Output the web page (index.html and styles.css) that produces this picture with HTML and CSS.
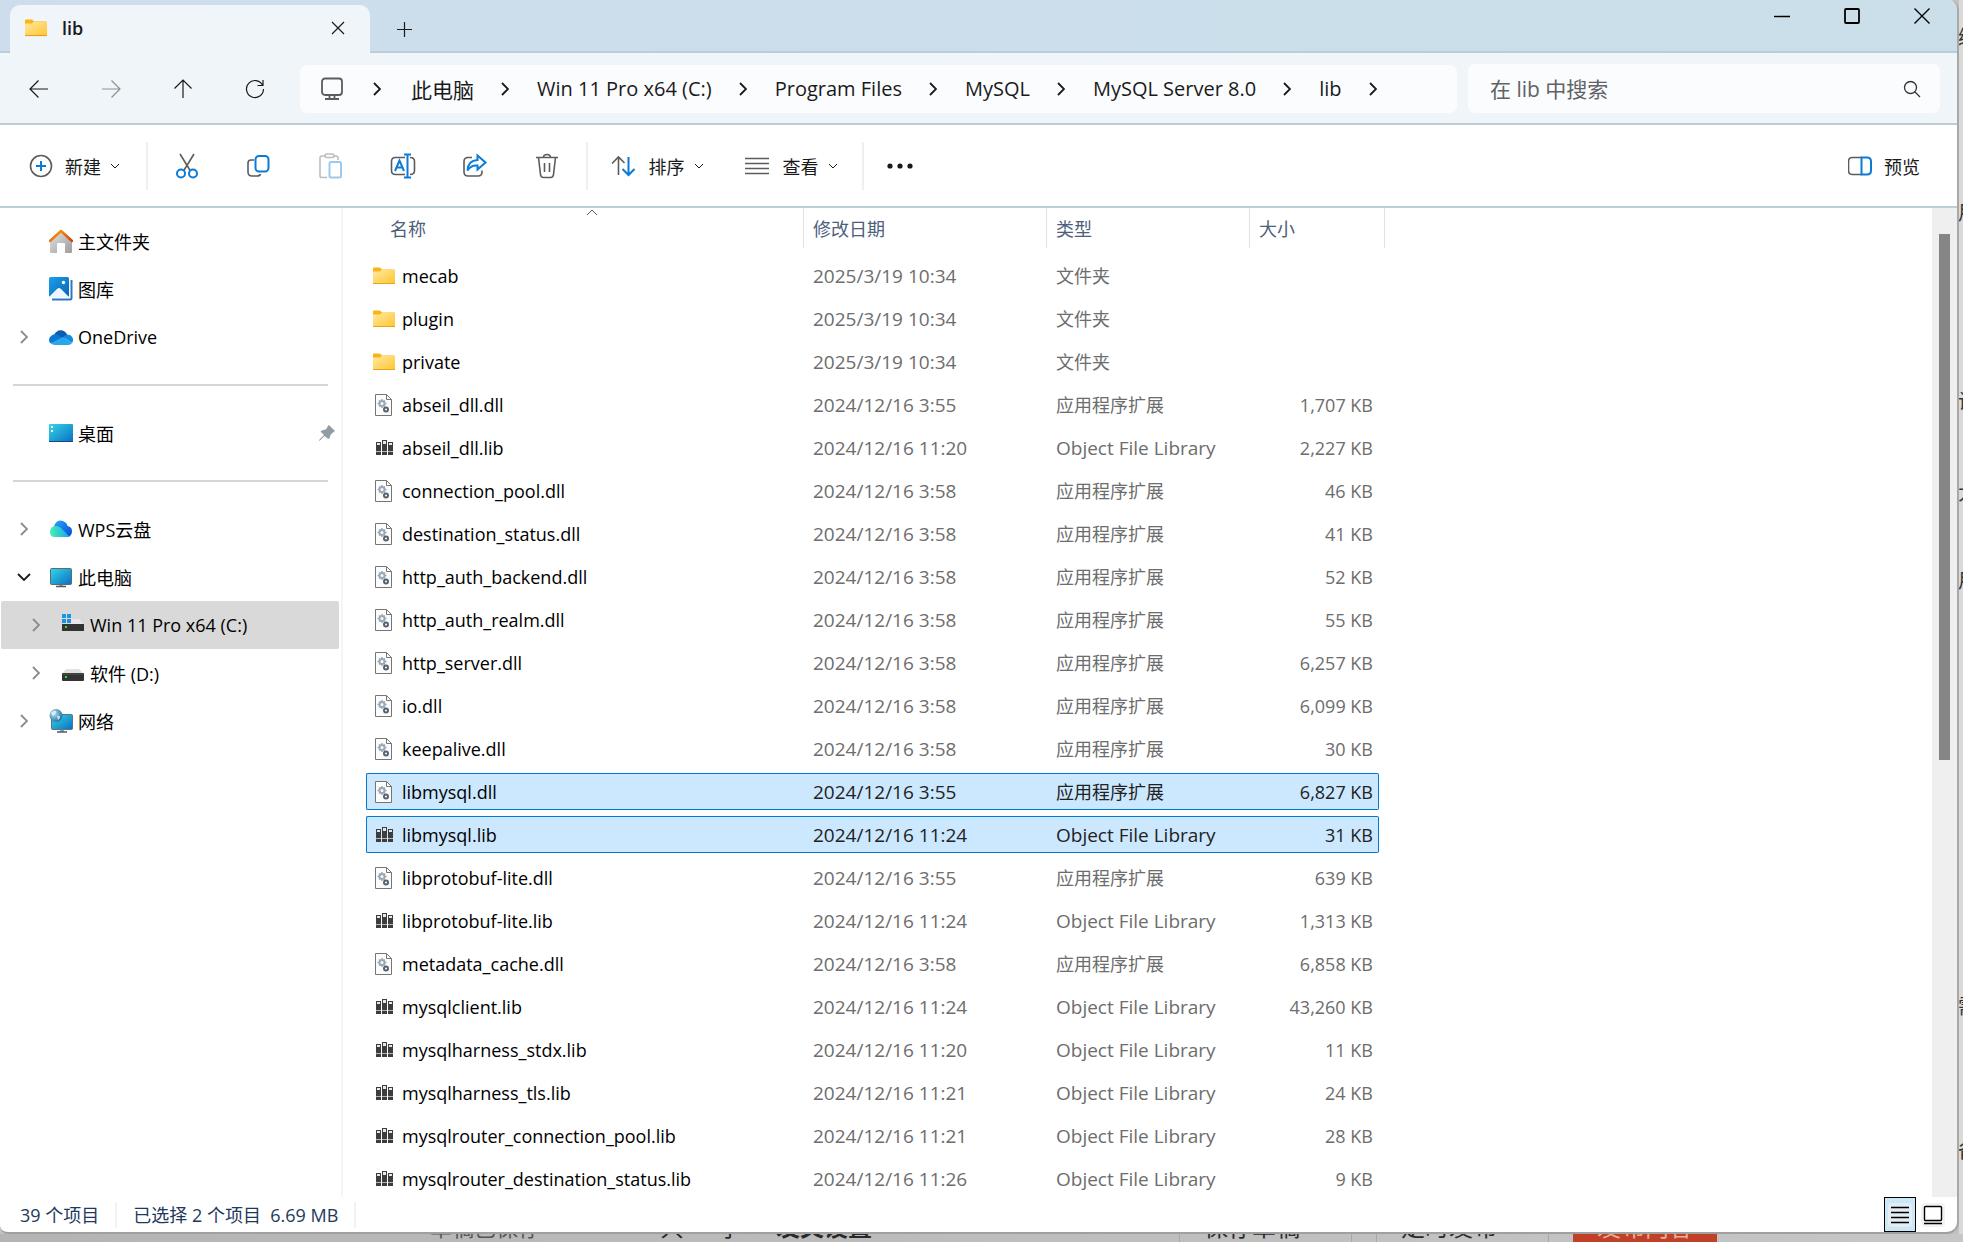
FILE: index.html
```
<!DOCTYPE html>
<html lang="zh-CN">
<head>
    <meta charset="UTF-8">
    <meta name="viewport" content="width=device-width, initial-scale=1.0">
    <title>lib</title>
    <link rel="stylesheet" href="styles.css">
</head>
<body>

    <!-- Shared icons -->
    <svg class="defs" aria-hidden="true">
        <defs>
            <linearGradient id="gFolder" x1="0" y1="0" x2="1" y2="1"><stop offset="0" stop-color="#ffe9a0"/><stop offset="1" stop-color="#ffc52e"/></linearGradient>
            <linearGradient id="gScreen" x1="0" y1="0" x2="1" y2="1"><stop offset="0" stop-color="#35d6e6"/><stop offset="1" stop-color="#0a6fc2"/></linearGradient>
            <linearGradient id="gRoof" x1="0" y1="0" x2="1" y2="0"><stop offset="0" stop-color="#e8741a"/><stop offset=".5" stop-color="#f58a0c"/><stop offset="1" stop-color="#d23c0e"/></linearGradient>
            <linearGradient id="gWall" x1="0" y1="0" x2="1" y2="1"><stop offset="0" stop-color="#e4e4e4"/><stop offset="1" stop-color="#9c9c9c"/></linearGradient>
            <linearGradient id="gPhoto" x1="0" y1="0" x2="1" y2="1"><stop offset="0" stop-color="#1ba2ea"/><stop offset="1" stop-color="#0a62b4"/></linearGradient>
            <linearGradient id="gWps" x1="0" y1="0" x2="1" y2="0"><stop offset="0" stop-color="#4af0b4"/><stop offset="1" stop-color="#12a5f0"/></linearGradient>
            <linearGradient id="gWps2" x1="0" y1="0" x2="1" y2="1"><stop offset="0" stop-color="#2aa8f8"/><stop offset="1" stop-color="#0446d8"/></linearGradient>
            <radialGradient id="gGlobe" cx=".35" cy=".35" r=".7"><stop offset="0" stop-color="#b9e2f2"/><stop offset="1" stop-color="#1f6f9f"/></radialGradient>
        </defs>
        <symbol id="folder" viewBox="0 0 24 24">
            <path d="M1 4.500q0-1 1-1h6l2 2h12q1 0 1 1V12H1z" fill="#fbb416"/>
            <path d="M1 7.500h7l1.500-1.500H23v14H1z" fill="url(#gFolder)"/>
            <path d="M1 19.500h22" stroke="#e8a21c"/>
        </symbol>
        <symbol id="dll" viewBox="0 0 24 24">
            <path d="M3.500 1.500h11l5 5v16h-16z" fill="#fcfcfc" stroke="#757575"/>
            <path d="M14.500 1.500v5h5" fill="none" stroke="#757575"/>
            <circle cx="10" cy="10.500" r="2.500" fill="none" stroke="#9aa8b6" stroke-width="2"/>
            <path d="M10 6v9M5.500 10.500h9M7 7.500l6 6M13 7.500l-6 6" stroke="#9aa8b6" stroke-dasharray="1.500 6" stroke-width="1.500"/>
            <circle cx="14" cy="16.500" r="2" fill="#fff" stroke="#556371" stroke-width="2"/>
        </symbol>
        <symbol id="archive" viewBox="0 0 24 24">
            <path d="M4 6h5v13H4zM10 4h5v15h-5zM16 6h5v13h-5z" fill="#3d3d3d"/>
            <path d="M5 7h3v2H5zM11 5h3v3h-3zM17 7h3v2h-3z" fill="#e8e8e8"/>
            <path d="M4 15.500h5M10 15.500h5M16 15.500h5" stroke="#b5b5b5"/>
        </symbol>
        <symbol id="chev" viewBox="0 0 8 14"><path d="M1 1l6 6-6 6" fill="none" stroke="currentColor" stroke-width="1.800"/></symbol>
        <symbol id="down" viewBox="0 0 10 6"><path d="M1 1l4 4 4-4" fill="none" stroke="currentColor"/></symbol>
        <symbol id="drive" viewBox="0 0 24 24">
            <path d="M5 8h13l5 5H1z" fill="#e1e1e4"/>
            <rect x="1" y="12" width="22" height="8" rx="1" fill="#333"/>
            <path d="M1 13h22" stroke="#555"/>
            <rect x="4" y="15" width="2" height="2" fill="#2ee62e"/>
        </symbol>
    </svg>

    <div class="window">
        <header class="titlebar">
            <div class="tab">
                <svg class="icon" width="24" height="24"><use href="#folder"/></svg>
                <span class="tab-title">lib</span>
                <button class="tab-close" aria-label="关闭标签页"><svg width="14" height="14" viewBox="0 0 14 14"><path d="M1 1l12 12M13 1L1 13"/></svg></button>
            </div>
            <button class="tab-new" aria-label="新标签页"><svg width="15" height="15" viewBox="0 0 15 15"><path d="M7.500 0v15M0 7.500h15"/></svg></button>
            <div class="window-buttons">
                <button aria-label="最小化"><svg width="16" height="16" viewBox="0 0 16 16"><path d="M0 8.500h16"/></svg></button>
                <button aria-label="最大化"><svg width="16" height="16" viewBox="0 0 16 16"><rect x="1" y="1" width="14" height="14" rx="1" stroke-width="1.800"/></svg></button>
                <button aria-label="关闭"><svg width="16" height="16" viewBox="0 0 16 16"><path d="M0.500 0.500l15 15M15.500 0.500l-15 15"/></svg></button>
            </div>
        </header>

        <nav class="navbar">
            <div class="nav-buttons">
                <button aria-label="后退"><svg width="20" height="20" viewBox="0 0 20 20"><path d="M19 10H1M9.500 1.500L1 10l8.500 8.500"/></svg></button>
                <button aria-label="前进" class="dim"><svg width="20" height="20" viewBox="0 0 20 20"><path d="M1 10h18M10.500 1.500L19 10l-8.500 8.500"/></svg></button>
                <button aria-label="向上"><svg width="20" height="20" viewBox="0 0 20 20"><path d="M10 19V1M1.500 9.500L10 1l8.500 8.500"/></svg></button>
                <button aria-label="刷新"><svg width="20" height="20" viewBox="0 0 20 20"><path d="M17.500 6A8.500 8.500 0 1 0 18.500 10M18 1v5.500h-5.500"/></svg></button>
            </div>
            <div class="address">
                <svg class="pc" width="24" height="24" viewBox="0 0 24 24"><rect x="2" y="1.500" width="20" height="16.500" rx="3"/><path d="M9.500 18v4M14.500 18v4M5 22h14"/></svg>
                <svg class="sep first" width="8" height="14"><use href="#chev"/></svg>
                <a href="#" class="zh">此电脑</a>
                <svg class="sep" width="8" height="14"><use href="#chev"/></svg>
                <a href="#">Win 11 Pro x64 (C:)</a>
                <svg class="sep" width="8" height="14"><use href="#chev"/></svg>
                <a href="#">Program Files</a>
                <svg class="sep" width="8" height="14"><use href="#chev"/></svg>
                <a href="#">MySQL</a>
                <svg class="sep" width="8" height="14"><use href="#chev"/></svg>
                <a href="#">MySQL Server 8.0</a>
                <svg class="sep" width="8" height="14"><use href="#chev"/></svg>
                <a href="#">lib</a>
                <svg class="sep" width="8" height="14"><use href="#chev"/></svg>
            </div>
            <div class="search">
                <input type="text" placeholder="在 lib 中搜索" aria-label="在 lib 中搜索">
                <svg width="18" height="18" viewBox="0 0 18 18"><circle cx="7.500" cy="7.500" r="6"/><path d="M12 12l5 5"/></svg>
            </div>
        </nav>

        <div class="toolbar">
            <button class="tool-new">
                <svg width="24" height="24" viewBox="0 0 24 24"><circle cx="12" cy="12" r="10.500"/><path class="blue" d="M12 7v10M7 12h10"/></svg>
                新建
                <svg class="caret" width="10" height="6"><use href="#down"/></svg>
            </button>
            <span class="divider"></span>
            <div class="tools">
                <button aria-label="剪切"><svg width="26" height="26" viewBox="0 0 26 26"><path d="M6 1l10.500 17M20 1L9.500 18"/><circle class="blue" cx="7" cy="20.500" r="4"/><circle class="blue" cx="19" cy="20.500" r="4"/></svg></button>
                <button aria-label="复制"><svg width="26" height="26" viewBox="0 0 26 26"><path d="M8 7H5q-3 0-3 3v9q0 4 4 4h5q3 0 3.500-2"/><rect class="blue" x="9.500" y="3" width="13" height="15.500" rx="3.500"/></svg></button>
                <button aria-label="粘贴" class="faded"><svg width="26" height="26" viewBox="0 0 26 26"><path d="M7 3H4q-2 0-2 2v18q0 1.500 2 1.500h5M16 3h2q2 0 2 2v2"/><rect x="7" y="1" width="9" height="3.500" rx="1.700"/><rect class="blue" x="11.500" y="9" width="11.500" height="15.500" rx="1.500"/></svg></button>
                <button aria-label="重命名"><svg width="26" height="26" viewBox="0 0 26 26"><path d="M15 4.500H5.500q-4 0-4 4v9q0 4 4 4H15M20 4.500q4.500 0 4.500 4v9q0 4-4.500 4"/><path class="blue" d="M5 18L9.500 7.500 14 18M6.500 14.500h6M17.500 1.500v23M14 1.500h7M14 24.500h7"/></svg></button>
                <button aria-label="共享"><svg width="26" height="26" viewBox="0 0 26 26"><path d="M10 4.500H6q-4 0-4 4V19q0 4 4 4h10q4 0 4-4v-1.500"/><path class="blue" d="M15.500 2.500L23.500 9.500l-8 7v-4q-7-.5-10 5Q6 7.500 15.500 7z"/></svg></button>
                <button aria-label="删除"><svg width="26" height="26" viewBox="0 0 26 26"><path d="M2 4.500h22M4.500 4.500l2 17q.3 3 3 3h7q2.700 0 3-3l2-17M9.500 4.500q0-3 3.500-3t3.500 3M10.500 10v9M15.500 10v9"/></svg></button>
            </div>
            <span class="divider"></span>
            <button class="tool-text">
                <svg width="24" height="24" viewBox="0 0 24 24"><path d="M7.500 21V3M1 9.500L7.500 3l6 6"/><path class="blue" d="M17.500 3v18M11.500 15l6 6 6-6"/></svg>
                排序
                <svg class="caret" width="10" height="6"><use href="#down"/></svg>
            </button>
            <button class="tool-text">
                <svg width="24" height="24" viewBox="0 0 24 24"><path d="M0 4.500h24M0 9.500h24M0 14.500h24M0 19.500h24"/></svg>
                查看
                <svg class="caret" width="10" height="6"><use href="#down"/></svg>
            </button>
            <span class="divider"></span>
            <button class="more" aria-label="更多"><svg width="26" height="6" viewBox="0 0 26 6"><circle cx="3" cy="3" r="2.600"/><circle cx="13" cy="3" r="2.600"/><circle cx="23" cy="3" r="2.600"/></svg></button>
            <button class="preview">
                <svg width="24" height="24" viewBox="0 0 24 24"><path d="M13.500 3.500h-9q-4 0-4 4v9q0 4 4 4h9"/><path class="blue" d="M13.500 3.500h5.500q4 0 4 4v9q0 4-4 4h-5.500z"/></svg>
                预览
            </button>
        </div>

        <div class="content">
            <aside class="sidebar">
                <a href="#" class="item">
                    <span class="arrow"></span>
                    <svg class="icon" width="24" height="24" viewBox="0 0 24 24"><path d="M1 11L12 2l11 9v12q0 1-1 1h-6v-9q0-1-1-1H9q-1 0-1 1v9H2q-1 0-1-1z" fill="url(#gWall)"/><path d="M1 12L12 2l11 10" fill="none" stroke="url(#gRoof)" stroke-width="2.500" stroke-linecap="round" stroke-linejoin="round"/></svg>
                    主文件夹
                </a>
                <a href="#" class="item">
                    <span class="arrow"></span>
                    <svg class="icon" width="24" height="24" viewBox="0 0 24 24"><path d="M22.500 3v18q0 1.500-1.500 1.500H3" fill="none" stroke="#2c78c4" stroke-width="2"/><rect width="20" height="20" rx="1.500" fill="url(#gPhoto)"/><path d="M0 20l8-8q2-2 4 0l8 8z" fill="#eef6ff"/><circle cx="14.500" cy="5.500" r="1.700" fill="#fff"/></svg>
                    图库
                </a>
                <a href="#" class="item">
                    <span class="arrow"><svg width="8" height="14"><use href="#chev"/></svg></span>
                    <svg class="icon" width="24" height="24" viewBox="0 0 24 24"><path d="M5 10q1-3 4.500-4.500 6-1.500 9 4.500l-3 4z" fill="#0a5cb4"/><path d="M1 18q-2-3 0-6 3-4 8-2l7 4-12 5z" fill="#0c78d4"/><path d="M14 12q3-3 7-2 5 3 2 8z" fill="#1489e0"/><path d="M2 18l12-6 9 6q-1 2-4 2H6q-3 0-4-2z" fill="#28a8ea"/></svg>
                    OneDrive
                </a>
                <hr>
                <a href="#" class="item">
                    <span class="arrow"></span>
                    <svg class="icon" width="24" height="24" viewBox="0 0 24 24"><rect y="3" width="24" height="18" rx="1" fill="url(#gScreen)"/><path d="M0 20.500h24" stroke="#0c4c80"/><path d="M2 5h2v2H2zM2 9h2v2H2z" fill="#fff"/></svg>
                    桌面
                    <svg class="pin" width="18" height="18" viewBox="0 0 18 18"><path d="M11 1l6 6-2 1.500q-1 .5-2.500 2.500-.5 3-2 4L6.500 12 2 16.500 1 17l.5-1.500L6 11 2.500 7.500Q4 6 7.500 5.500 9.500 4 9.500 2.500z"/></svg>
                </a>
                <hr>
                <a href="#" class="item">
                    <span class="arrow"><svg width="8" height="14"><use href="#chev"/></svg></span>
                    <svg class="icon" width="24" height="24" viewBox="0 0 24 24"><path d="M5 9q3-7 9-5 4 1.500 4.500 5 5 1 4.500 6-.5 5-6 5h-6z" fill="url(#gWps2)"/><path d="M1 15q0-6 6-6 3 0 5 2l5 5q2 3 4 3.500-1 .5-4 .5H6q-5 0-5-5z" fill="url(#gWps)"/></svg>
                    WPS云盘
                </a>
                <a href="#" class="item">
                    <span class="arrow open"><svg width="8" height="14"><use href="#chev"/></svg></span>
                    <svg class="icon" width="24" height="24" viewBox="0 0 24 24"><path d="M10 19h4v2h-4z" fill="#9aa4ac"/><path d="M7 21.500h10" stroke="#4e5a64" stroke-width="1.500"/><rect x="1.500" y="3.500" width="21" height="16" rx="1" fill="url(#gScreen)" stroke="#5a6a76"/></svg>
                    此电脑
                </a>
                <a href="#" class="item child current">
                    <span class="arrow"><svg width="8" height="14"><use href="#chev"/></svg></span>
                    <svg class="icon" width="24" height="24" viewBox="0 0 24 24"><path d="M10 6h8l5 6H10z" fill="#e8e8ea"/><rect x="1" y="11" width="22" height="7" fill="#333"/><rect x="4" y="13" width="2" height="2" fill="#2ee62e"/><path d="M1 1h4v4H1zM6 1h4v4H6zM1 6h4v4H1zM6 6h4v4H6z" fill="#1a94e0"/></svg>
                    Win 11 Pro x64 (C:)
                </a>
                <a href="#" class="item child">
                    <span class="arrow"><svg width="8" height="14"><use href="#chev"/></svg></span>
                    <svg class="icon" width="24" height="24"><use href="#drive"/></svg>
                    软件 (D:)
                </a>
                <a href="#" class="item">
                    <span class="arrow"><svg width="8" height="14"><use href="#chev"/></svg></span>
                    <svg class="icon" width="24" height="24" viewBox="0 0 24 24"><path d="M11 20h4v3h-4z" fill="#9aa4ac"/><path d="M8 23h10" stroke="#4e5a64" stroke-width="1.500"/><rect x="2.500" y="5.500" width="21" height="15" rx="1" fill="url(#gScreen)" stroke="#5a7484"/><circle cx="7" cy="6.500" r="6.500" fill="url(#gGlobe)"/><path d="M2 4q2-3 5-2 1 2-1 3-1 3-3 1zM8 7q3-1 3 1t-2 3z" fill="#e4f4fa" opacity=".8"/></svg>
                    网络
                </a>
            </aside>

            <main class="files">
                <table>
                    <thead>
                        <tr>
                            <th class="col-name">名称<svg class="sort" width="12" height="7" viewBox="0 0 12 7"><path d="M1 6l5-5 5 5"/></svg></th>
                            <th class="col-date">修改日期</th>
                            <th class="col-type">类型</th>
                            <th class="col-size">大小</th>
                        </tr>
                    </thead>
                    <tbody>
                        <tr><td><svg><use href="#folder"/></svg>mecab</td><td>2025/3/19 10:34</td><td class="zh">文件夹</td><td></td></tr>
                        <tr><td><svg><use href="#folder"/></svg>plugin</td><td>2025/3/19 10:34</td><td class="zh">文件夹</td><td></td></tr>
                        <tr><td><svg><use href="#folder"/></svg>private</td><td>2025/3/19 10:34</td><td class="zh">文件夹</td><td></td></tr>
                        <tr><td><svg><use href="#dll"/></svg>abseil_dll.dll</td><td>2024/12/16 3:55</td><td class="zh">应用程序扩展</td><td>1,707 KB</td></tr>
                        <tr><td><svg><use href="#archive"/></svg>abseil_dll.lib</td><td>2024/12/16 11:20</td><td>Object File Library</td><td>2,227 KB</td></tr>
                        <tr><td><svg><use href="#dll"/></svg>connection_pool.dll</td><td>2024/12/16 3:58</td><td class="zh">应用程序扩展</td><td>46 KB</td></tr>
                        <tr><td><svg><use href="#dll"/></svg>destination_status.dll</td><td>2024/12/16 3:58</td><td class="zh">应用程序扩展</td><td>41 KB</td></tr>
                        <tr><td><svg><use href="#dll"/></svg>http_auth_backend.dll</td><td>2024/12/16 3:58</td><td class="zh">应用程序扩展</td><td>52 KB</td></tr>
                        <tr><td><svg><use href="#dll"/></svg>http_auth_realm.dll</td><td>2024/12/16 3:58</td><td class="zh">应用程序扩展</td><td>55 KB</td></tr>
                        <tr><td><svg><use href="#dll"/></svg>http_server.dll</td><td>2024/12/16 3:58</td><td class="zh">应用程序扩展</td><td>6,257 KB</td></tr>
                        <tr><td><svg><use href="#dll"/></svg>io.dll</td><td>2024/12/16 3:58</td><td class="zh">应用程序扩展</td><td>6,099 KB</td></tr>
                        <tr><td><svg><use href="#dll"/></svg>keepalive.dll</td><td>2024/12/16 3:58</td><td class="zh">应用程序扩展</td><td>30 KB</td></tr>
                        <tr class="selected"><td><svg><use href="#dll"/></svg>libmysql.dll</td><td>2024/12/16 3:55</td><td class="zh">应用程序扩展</td><td>6,827 KB</td></tr>
                        <tr class="selected"><td><svg><use href="#archive"/></svg>libmysql.lib</td><td>2024/12/16 11:24</td><td>Object File Library</td><td>31 KB</td></tr>
                        <tr><td><svg><use href="#dll"/></svg>libprotobuf-lite.dll</td><td>2024/12/16 3:55</td><td class="zh">应用程序扩展</td><td>639 KB</td></tr>
                        <tr><td><svg><use href="#archive"/></svg>libprotobuf-lite.lib</td><td>2024/12/16 11:24</td><td>Object File Library</td><td>1,313 KB</td></tr>
                        <tr><td><svg><use href="#dll"/></svg>metadata_cache.dll</td><td>2024/12/16 3:58</td><td class="zh">应用程序扩展</td><td>6,858 KB</td></tr>
                        <tr><td><svg><use href="#archive"/></svg>mysqlclient.lib</td><td>2024/12/16 11:24</td><td>Object File Library</td><td>43,260 KB</td></tr>
                        <tr><td><svg><use href="#archive"/></svg>mysqlharness_stdx.lib</td><td>2024/12/16 11:20</td><td>Object File Library</td><td>11 KB</td></tr>
                        <tr><td><svg><use href="#archive"/></svg>mysqlharness_tls.lib</td><td>2024/12/16 11:21</td><td>Object File Library</td><td>24 KB</td></tr>
                        <tr><td><svg><use href="#archive"/></svg>mysqlrouter_connection_pool.lib</td><td>2024/12/16 11:21</td><td>Object File Library</td><td>28 KB</td></tr>
                        <tr><td><svg><use href="#archive"/></svg>mysqlrouter_destination_status.lib</td><td>2024/12/16 11:26</td><td>Object File Library</td><td>9 KB</td></tr>
                    </tbody>
                </table>
            </main>
            <div class="scrollbar"><div class="thumb"></div></div>
        </div>

        <footer class="status">
            <span class="status-cell">39 个项目</span>
            <span class="status-cell">已选择 2 个项目&nbsp; 6.69 MB</span>
            <div class="views">
                <button class="active" aria-label="详细信息"><svg width="24" height="24" viewBox="0 0 24 24"><path d="M3 4.500h18M3 9.500h18M3 14.500h18M3 19.500h18"/></svg></button>
                <button aria-label="大图标"><svg width="24" height="24" viewBox="0 0 24 24"><rect x="3.500" y="3.500" width="17" height="14" rx="1" fill="#fff"/><path d="M3 20.500h18"/></svg></button>
            </div>
        </footer>
    </div>

    <!-- Page showing behind the window -->
    <div class="behind-right">
        <span>编</span><span>用</span><span>设</span><span>大</span><span>用</span><span>需</span><span>备</span>
    </div>
    <div class="behind-bottom">
        <span class="saved">草稿已保存</span>
        <span>共</span>
        <span>字</span>
        <b>发文设置</b>
        <button class="draft">保存草稿</button>
        <button class="draft">定时发布</button>
        <button class="publish">发布内容</button>
    </div>

</body>
</html>
```
FILE: styles.css
```
* {
    box-sizing: border-box;
}

body {
    margin: 0;
    height: 100vh;
    overflow: hidden;
    display: grid;
    grid-template-columns: 1fr 4px;
    grid-template-rows: 1fr 8px;
    background: #c2c2c2;
    font-family: "Open Sans", "Noto Sans CJK SC", sans-serif;
    font-size: 18px;
    color: #1a1a1a;
}

button {
    border: 0;
    padding: 0;
    background: none;
    font: inherit;
    color: inherit;
    display: flex;
    align-items: center;
    justify-content: center;
}

a {
    color: inherit;
    text-decoration: none;
}

svg {
    flex: none;
    display: block;
}

.defs {
    position: absolute;
    width: 0;
    height: 0;
}

/* Window frame */
.window {
    display: flex;
    flex-direction: column;
    min-height: 0;
    min-width: 0;
    overflow: hidden;
    background: #fff;
    border-right: 2px solid #a8a8a8;
    border-bottom: 2px solid #a0a0a0;
    border-radius: 0 10px 12px 8px;
}

.titlebar {
    display: flex;
    flex: none;
    height: 53px;
    padding-left: 10px;
    background: linear-gradient(90deg, #cdddec, #cadfea);
    box-shadow: inset 0 -2px #b9cddb;
}

.titlebar svg,
.nav-buttons svg {
    fill: none;
    stroke: #1a1a1a;
    stroke-width: 1.2;
}

.tab {
    display: flex;
    align-items: center;
    width: 360px;
    margin-top: 5px;
    padding: 0 14px 2px 14px;
    background: #eff5f9;
    border-radius: 10px 10px 0 0;
}

.tab .icon {
    stroke: none;
}

.tab-title {
    margin-left: 14px;
    font-weight: 600;
}

.tab-close {
    width: 36px;
    height: 36px;
    margin-left: auto;
}

.tab-new {
    width: 68px;
    padding-top: 5px;
}

.window-buttons {
    display: flex;
    height: 31px;
    margin-left: auto;
}

.window-buttons button {
    width: 70px;
}

.window-buttons svg {
    stroke: #000;
    stroke-width: 1.4;
}

.navbar {
    display: flex;
    flex: none;
    align-items: center;
    height: 72px;
    padding: 1px 17px 0 3px;
    background: #eff5f9;
    border-bottom: 2px solid #b9cddb;
}

.nav-buttons {
    display: flex;
    width: 297px;
}

.nav-buttons button {
    width: 72px;
    height: 48px;
}

.nav-buttons .dim {
    opacity: .45;
}

.address {
    flex: 1;
    display: flex;
    align-items: center;
    height: 48px;
    padding-left: 20px;
    background: #fbfcfe;
    border-radius: 7px;
    font-size: 20px;
    white-space: nowrap;
}

.address .zh {
    font-size: 21px;
}

.pc {
    fill: none;
    stroke: #5c5c5c;
    stroke-width: 1.8;
}

.sep {
    margin: 0 28px 0 27px;
}

.sep.first {
    margin-left: 29px;
    margin-right: 30px;
}

.search {
    display: flex;
    align-items: center;
    width: 472px;
    height: 49px;
    margin-left: 11px;
    padding: 0 19px 0 22px;
    background: #fbfcfe;
    border-radius: 7px;
}

.search input {
    flex: 1;
    min-width: 0;
    padding: 0;
    border: 0;
    outline: 0;
    background: none;
    font: inherit;
    font-size: 21px;
}

.search input::placeholder {
    color: #606266;
    opacity: 1;
}

.search svg {
    fill: none;
    stroke: #333;
    stroke-width: 1.3;
}

/* Command bar */
.toolbar {
    display: flex;
    flex: none;
    align-items: center;
    height: 83px;
    padding: 0 37px 0 29px;
    border-bottom: 2px solid #b9cfda;
}

.toolbar svg {
    fill: none;
    stroke: #5c5c5c;
    stroke-width: 1.6;
}

.toolbar .blue {
    stroke: #0a7bd8;
    stroke-width: 2;
}

.toolbar .caret {
    margin-left: 9px;
    stroke-width: 1;
}

.tool-new svg:first-child,
.preview svg:first-child {
    margin-right: 12px;
}

.tool-text svg:first-child {
    margin-right: 14px;
}

.divider {
    width: 2px;
    height: 48px;
    background: #efefef;
}

.tool-new {
    margin-right: 26px;
}

.tools {
    display: flex;
    padding: 0 3px;
}

.tools button {
    width: 72px;
    height: 48px;
}

.faded {
    opacity: .4;
}

.tool-text {
    width: 134px;
}

.divider + .tool-text {
    margin-left: 2px;
}

.tool-text + .divider {
    margin-left: 4px;
}

.more {
    width: 72px;
}

.toolbar .more svg {
    fill: #1a1a1a;
    stroke: none;
}

.preview {
    margin-left: auto;
}

/* Navigation pane */
.content {
    flex: 1;
    display: flex;
    min-height: 0;
    overflow: hidden;
}

.sidebar {
    flex: none;
    width: 343px;
    padding: 9px 2px 0 1px;
    border-right: 2px solid #f5f5f5;
    color: #000;
}

.item {
    display: flex;
    align-items: center;
    height: 48px;
    padding-left: 16px;
    border-radius: 2px;
}

.item .icon {
    margin-right: 5px;
}

.item.child {
    padding-left: 31px;
}

.arrow {
    display: flex;
    justify-content: center;
    width: 14px;
    margin-right: 18px;
    color: #8c8c8c;
}

.arrow.open {
    color: #1a1a1a;
    transform: rotate(90deg);
}

.child .arrow {
    justify-content: flex-start;
    width: 29px;
    margin-right: 0;
}

.current {
    background: #d9d9d9;
}

.sidebar hr {
    height: 2px;
    margin: 23px 11px 23px 12px;
    border: 0;
    background: #d6d6d6;
}

.pin {
    margin-left: auto;
    margin-right: 3px;
    fill: #929ca5;
}

/* File list */
.files {
    flex: 1;
    min-width: 0;
    padding-left: 23px;
}

table {
    table-layout: fixed;
    width: 1013px;
    margin-top: -6px;
    border-spacing: 0 6px;
}

th {
    position: relative;
    height: 43px;
    padding: 0 0 4px 9px;
    font-weight: 400;
    text-align: left;
    color: #4c607a;
}

th::after {
    content: "";
    position: absolute;
    top: 0;
    right: 0;
    width: 1px;
    height: 40px;
    background: #e2e2e2;
}

.col-name {
    width: 438px;
    padding-left: 24px;
}

.col-date {
    width: 243px;
}

.col-type {
    width: 203px;
}

.col-size {
    width: 129px;
}

.col-size::after {
    right: -6px;
}

.sort {
    position: absolute;
    top: 1px;
    left: 220px;
    fill: none;
    stroke: #5c5c5c;
}

td {
    height: 37px;
    padding: 0 0 0 9px;
    border: solid transparent;
    border-width: 1px 0;
    font-size: 19px;
    line-height: 24px;
    color: #6d6d6d;
    white-space: nowrap;
}

td:first-child {
    padding-left: 5px;
    border-left-width: 1px;
    font-size: 18px;
    color: #000;
}

td:last-child {
    padding-right: 5px;
    border-right-width: 1px;
    font-size: 18px;
    text-align: right;
}

td.zh {
    font-size: 18px;
}

td svg {
    display: inline-block;
    width: 24px;
    height: 24px;
    margin-right: 6px;
    vertical-align: top;
}

.selected td {
    background: #cce8ff;
    border-color: #0078d4;
    color: #222;
}

.selected td:first-child {
    border-radius: 2px 0 0 2px;
    color: #000;
}

.selected td:last-child {
    border-radius: 0 2px 2px 0;
}

.scrollbar {
    flex: none;
    width: 25px;
    padding: 26px 7px 0;
    background: #efefef;
}

.thumb {
    height: 54.6%;
    background: #858585;
}

/* Status bar */
.status {
    display: flex;
    flex: none;
    align-items: center;
    height: 35px;
    padding: 0 12px 0 20px;
    color: #1e395b;
}

.status-cell {
    margin-right: 16px;
    padding-right: 16px;
    border-right: 2px solid #f2f2f2;
    line-height: 26px;
}

.views {
    display: flex;
    gap: 5px;
    margin-left: auto;
}

.views svg {
    fill: none;
    stroke: #000;
    stroke-width: 1.4;
    border-radius: 4px;
    background: #f2f2f2;
}

.views .active {
    width: 32px;
    height: 35px;
    border: 1px solid #000;
    background: #cce8f7;
}

.views .active svg {
    background: #e2edf5;
}

/* Page behind the window */
.behind-right {
    position: relative;
    overflow: hidden;
    background: #dadada;
    font-size: 20px;
    color: #333;
}

.behind-right span {
    position: absolute;
    left: -1px;
    line-height: 24px;
}

.behind-right span:nth-child(1) { top: 26px; }
.behind-right span:nth-child(2) { top: 201px; }
.behind-right span:nth-child(3) { top: 390px; }
.behind-right span:nth-child(4) { top: 481px; }
.behind-right span:nth-child(5) { top: 569px; }
.behind-right span:nth-child(6) { top: 995px; }
.behind-right span:nth-child(7) { top: 1139px; }

.behind-bottom {
    grid-column: 1 / -1;
    display: flex;
    align-items: flex-end;
    overflow: hidden;
    height: 8px;
    padding: 0 246px 0 430px;
    background: linear-gradient(90deg, #b4b4b4, #c6c6c6);
    font-size: 24px;
    line-height: 30px;
    color: #2a2a2a;
    white-space: nowrap;
}

.behind-bottom .saved {
    margin-right: 120px;
    font-size: 22px;
    color: #555;
}

.behind-bottom span + span {
    margin-right: 34px;
}

.behind-bottom .draft {
    justify-content: flex-start;
    width: 173px;
    margin-left: 24px;
    padding-left: 24px;
    border: solid #a8a8a8;
    border-width: 0 1px;
}

.behind-bottom b + .draft {
    margin-left: auto;
}

.behind-bottom .publish {
    width: 144px;
    margin-left: 24px;
    background: #c04028;
    color: #e8b0a0;
}
```
